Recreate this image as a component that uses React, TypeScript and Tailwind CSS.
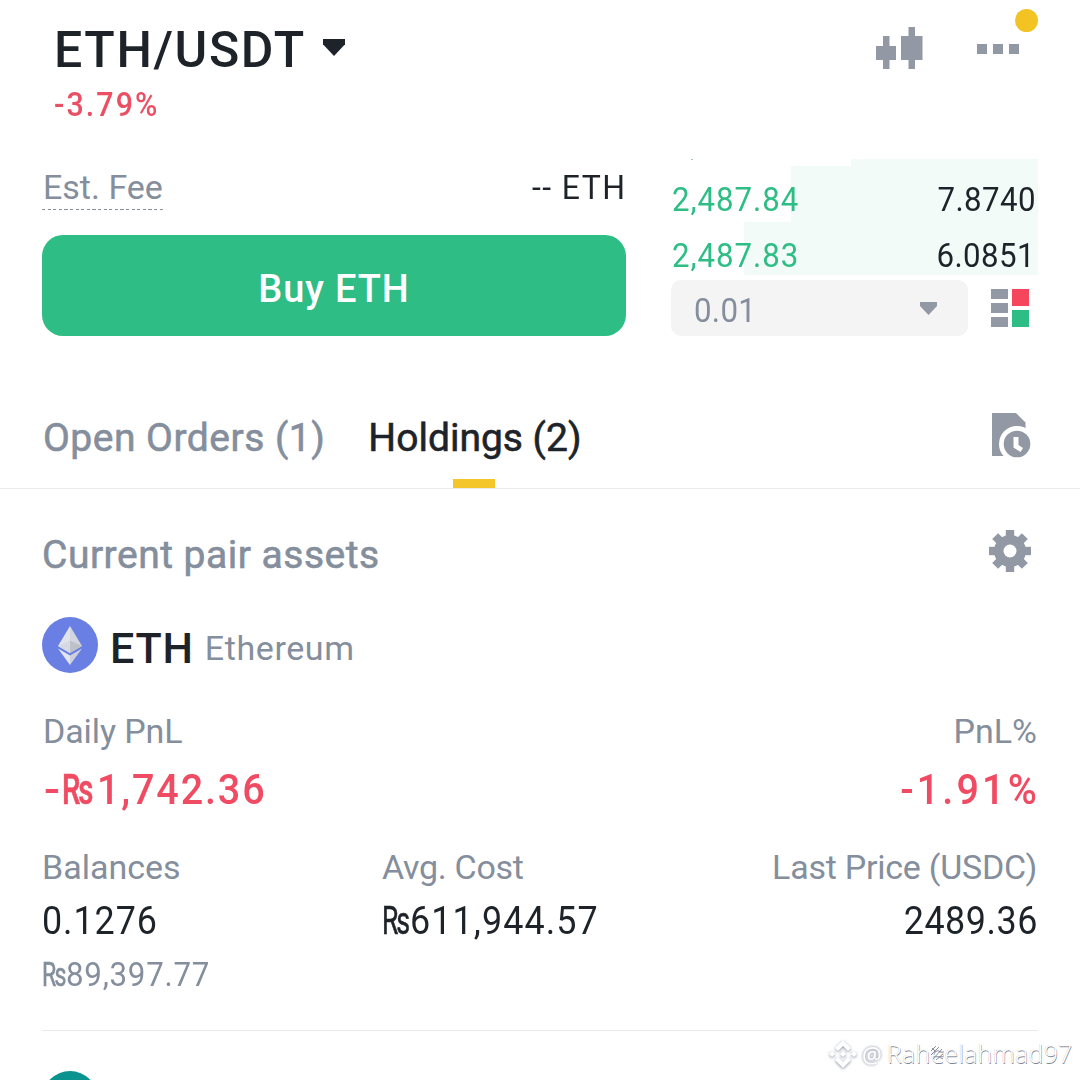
const depthRows = [
  { price: "2,487.84", amount: "7.8740" },
  { price: "2,487.83", amount: "6.0851" },
]

function CandlesIcon() {
  return (
    <svg width="48" height="42" viewBox="0 0 48 42" fill="#9299a4">
      <path d="M7 9h6.500v10H20v14h-6.500v9H7v-9H0V19h7zM32.500 0H39v9h7.500v24H39v9h-6.500v-9H25V9h7.500z" />
    </svg>
  )
}

function Caret({ className }: { className: string }) {
  return (
    <svg className={className} viewBox="0 0 22 16" preserveAspectRatio="none" fill="currentColor">
      <path d="M0 0h22v5L11 16 0 5z" />
    </svg>
  )
}

function BookIcon() {
  return (
    <svg width="39" height="39" viewBox="0 0 39 39">
      <path d="M0 0h17v10H0zM0 14h17v10H0zM0 28h17v10H0z" fill="#9299a4" />
      <path d="M21 0h17v17H21z" fill="#f6465d" />
      <path d="M21 21h17v17H21z" fill="#2ebd85" />
    </svg>
  )
}

function HistoryIcon() {
  return (
    <svg width="39" height="45" viewBox="0 0 39 45">
      <path d="M0 0h24l9.500 9.500V28L12 43H0z" fill="#9299a4" />
      <circle cx="25" cy="31" r="18" fill="#fff" />
      <circle cx="25" cy="31" r="13.300" fill="#9299a4" />
      <path d="M21.500 24h5v8l4.500 3-2.500 4-7-4.500z" fill="#fff" />
    </svg>
  )
}

function GearIcon() {
  return (
    <svg width="42" height="42" viewBox="-21 -21 42 42" fill="#9299a4">
      {[0, 45, 90, 135].map((angle) => (
        <rect key={angle} x="-4.200" y="-21" width="8.400" height="42" transform={`rotate(${angle})`} />
      ))}
      <circle r="16" />
      <circle r="6.500" fill="#fff" />
    </svg>
  )
}

function EthLogo() {
  return (
    <svg width="56" height="56" viewBox="0 0 56 56">
      <circle cx="28" cy="28" r="28" fill="#697fe3" />
      <path d="M28 9 16 29l12 7z" fill="#e0e3ea" />
      <path d="m28 9 12 20-12 7z" fill="#d3d6df" />
      <path d="m16 29 12-5.500V36z" fill="#d6d9e2" />
      <path d="m40 29-12-5.500V36z" fill="#bfc1c8" />
      <path d="m16 31.500 12 7V48z" fill="#e3e6ee" />
      <path d="m40 31.500-12 7V48z" fill="#cdd0da" />
    </svg>
  )
}

// the rupee sign is set condensed next to the digits
function Rupee() {
  return (
    <span className="-mr-[0.34em] inline-block origin-left scale-x-[0.68] [-webkit-text-stroke:0.6px_currentColor]">₨</span>
  )
}

function Watermark() {
  return (
    <div className="absolute left-[829px] top-[1037px] flex h-[34px] items-center whitespace-nowrap font-['Noto_Sans'] text-white">
      <svg
        className="[filter:drop-shadow(0_1px_1.5px_rgba(90,98,130,0.7))]"
        width="28"
        height="28"
        viewBox="0 0 28 28"
        fill="#fff"
      >
        <path d="m14 0 8 8-3 3-5-5-5 5-3-3zM14 28l8-8-3-3-5 5-5-5-3 3zM3 11l3 3-3 3-3-3zM25 11l3 3-3 3-3-3zM14 11l3 3-3 3-3-3z" />
      </svg>
      <span className="ml-[5px] text-[22px] font-medium [filter:drop-shadow(0_0_1.5px_rgba(90,98,130,0.8))]">@</span>
      <span className="relative ml-[5px] text-[25px] font-light tracking-[0.1px] [text-shadow:0.5px_0.5px_0.5px_rgba(70,80,100,0.7),-0.5px_0_0.5px_rgba(70,80,100,0.25)]">
        Raheelahmad97
        <svg className="absolute left-[43px] top-[10px]" width="15" height="16" viewBox="0 0 15 16" fill="none" stroke="#8d939e">
          <path d="M1 6 6 1M1 10l8-8M3 14 12 4M6 15l7-6M9 7h5M2 3l3 3M9 12l4 2" />
        </svg>
      </span>
    </div>
  )
}

export default function App() {
  return (
    <div className="relative h-[1080px] w-[1080px] overflow-hidden bg-white font-[Roboto,sans-serif] text-[#1e2329]">
      <header className="flex justify-between pl-[54px] pr-[42px] pt-6">
        <div>
          <div className="flex h-[50px] items-center">
            <h1 className="pt-[2px] text-[50px] font-medium leading-none tracking-[1.6px]">ETH/USDT</h1>
            <Caret className="mb-[3px] ml-[17px] h-[17px] w-[22px]" />
          </div>
          <p className="mt-[11px] h-10 origin-left scale-x-[0.92] text-[33px] font-medium leading-10 tracking-[2.3px] text-[#ea4f64]">
            -3.79%
          </p>
        </div>
        <div className="flex items-start">
          <div className="mt-[3px]">
            <CandlesIcon />
          </div>
          <div className="relative ml-[53px] mt-5 flex w-[61px] gap-[6.5px]">
            <span className="h-[9.5px] w-[9.5px] bg-[#9299a4]" />
            <span className="h-[9.5px] w-[9.5px] bg-[#9299a4]" />
            <span className="h-[9.5px] w-[9.5px] bg-[#9299a4]" />
            <span className="absolute -top-[35px] right-0 h-[23px] w-[23px] rounded-full bg-[#f3c323]" />
          </div>
        </div>
      </header>

      <section className="mt-[34px] flex h-[177px] justify-between pl-[42px] pr-[42px]">
        <div className="w-[584px]">
          <div className="flex h-[56px] items-center justify-between text-[34px]">
            <div className="relative pl-px leading-[46px] text-[#848e9c]">
              Est. Fee
              <div className="absolute bottom-0 left-0 h-[1.5px] w-[121px] bg-[repeating-linear-gradient(90deg,#848e9c_0_3.200px,transparent_3.200px_5.600px)]" />
            </div>
            <span className="origin-right scale-x-[0.94] tracking-[1.5px]">-- ETH</span>
          </div>
          <button className="mt-5 block h-[101px] w-full rounded-[21px] bg-[#2ebd85] pt-[8px] text-[38px] font-medium tracking-[0.9px] text-white">
            Buy ETH
          </button>
        </div>

        <div className="w-[367px]">
          <div className="flex h-[7px] justify-between">
            <span className="ml-5 h-px w-[2px] bg-[#9fc9b8]" />
            <span className="w-[187px] bg-[#f3fbf8]" />
          </div>
          <div className="flex h-[56px] items-center justify-between bg-[linear-gradient(90deg,transparent_120px,#f3fbf8_120px)] pl-px pr-[2px] pt-[10px] text-[34px]">
            <span className="origin-left scale-x-[0.92] tracking-[1px] text-[#2ebd85]">{depthRows[0].price}</span>
            <span className="origin-right scale-x-[0.92] tracking-[0.4px]">{depthRows[0].amount}</span>
          </div>
          <div className="flex h-[53px] items-center justify-between bg-[linear-gradient(90deg,transparent_73px,#f3fbf8_73px)] pl-px pr-[3px] pt-[13px] text-[34px]">
            <span className="origin-left scale-x-[0.92] tracking-[1px] text-[#2ebd85]">{depthRows[1].price}</span>
            <span className="origin-right scale-x-[0.92] tracking-[0.4px]">{depthRows[1].amount}</span>
          </div>
          <div className="mt-[5px] flex items-center">
            <div className="flex h-[56px] w-[297px] items-center justify-between rounded-[10px] bg-[#f4f4f4] pl-[23px] pr-[31px] text-[34px] text-[#848e9c]">
              <span className="origin-left scale-x-[0.92] pt-1 tracking-[0.3px]">0.01</span>
              <Caret className="h-[13px] w-[17px] text-[#9299a4]" />
            </div>
            <div className="ml-[23px]">
              <BookIcon />
            </div>
          </div>
        </div>
      </section>

      <nav className="flex h-[153px] items-end border-b border-[#eaebec] pl-[43px] pr-[49px] text-[39px] [-webkit-text-stroke:0.6px_currentColor]">
        <span className="h-[75px] leading-[50px] tracking-[0.5px] text-[#848e9c]">Open Orders (1)</span>
        <div className="relative ml-[43px] h-[75px] leading-[50px]">
          Holdings (2)
          <div className="absolute bottom-0 left-[85px] h-[9px] w-[42px] bg-[#f5c62c]" />
        </div>
        <div className="mb-[30px] ml-auto">
          <HistoryIcon />
        </div>
      </nav>

      <section className="px-[42px]">
        <div className="flex h-[124px] items-center justify-between pr-[7px]">
          <h2 className="pt-[8px] text-[39px] tracking-[0.5px] text-[#848e9c] [-webkit-text-stroke:0.6px_currentColor]">
            Current pair assets
          </h2>
          <GearIcon />
        </div>

        <div className="mt-[4px] flex h-[56px] items-center">
          <EthLogo />
          <span className="ml-[12px] pt-[7px] text-[43px] font-medium tracking-[0.8px]">ETH</span>
          <span className="ml-[11px] pt-[6px] text-[34px] tracking-[0.6px] text-[#848e9c]">Ethereum</span>
        </div>

        <div className="mt-[33px] flex h-[50px] items-center justify-between pr-px text-[34px] text-[#848e9c]">
          <span className="pl-px tracking-[-0.1px]">Daily PnL</span>
          <span>PnL%</span>
        </div>
        <div className="flex h-[66px] items-center justify-between text-[43px] font-medium text-[#ef4b62]">
          <span>
            <span className="mr-[5px] inline-block origin-left translate-x-[2px] scale-x-110">-</span>
            <Rupee />
            <span className="ml-[4px] inline-block origin-left scale-x-[0.92] tracking-[2px]">1,742.36</span>
          </span>
          <span className="-mr-[2px] origin-right scale-x-[0.92] tracking-[3.4px]">-1.91%</span>
        </div>

        <div className="mt-[20px] grid grid-cols-[340px_300px_1fr] text-[39px]">
          <div className="flex flex-col items-start whitespace-nowrap">
            <span className="h-[51px] text-[34px] leading-[51px] text-[#848e9c]">Balances</span>
            <span className="h-[54px] origin-left scale-x-[0.92] leading-[56px] tracking-[1px]">0.1276</span>
            <span className="h-[54px] text-[34px] leading-[54px] text-[#848e9c]">
              <Rupee />
              <span className="inline-block origin-left scale-x-[0.92] tracking-[0.8px]">89,397.77</span>
            </span>
          </div>
          <div className="flex flex-col items-start whitespace-nowrap">
            <span className="h-[51px] text-[34px] leading-[51px] tracking-[-0.3px] text-[#848e9c]">Avg. Cost</span>
            <span className="h-[54px] leading-[56px]">
              <Rupee />
              <span className="inline-block origin-left scale-x-[0.92] tracking-[1.2px]">611,944.57</span>
            </span>
          </div>
          <div className="flex flex-col items-end whitespace-nowrap">
            <span className="h-[51px] pr-px text-[34px] leading-[51px] tracking-[-0.25px] text-[#848e9c]">Last Price (USDC)</span>
            <span className="h-[54px] origin-right scale-x-[0.92] leading-[56px] tracking-[0.6px]">2489.36</span>
          </div>
        </div>

        <div className="mt-[29px] h-px bg-[#eaebec]" />
        <div className="mt-10 h-[56px] w-[56px] rounded-full bg-[#0b9390]" />
      </section>

      <Watermark />
    </div>
  )
}
